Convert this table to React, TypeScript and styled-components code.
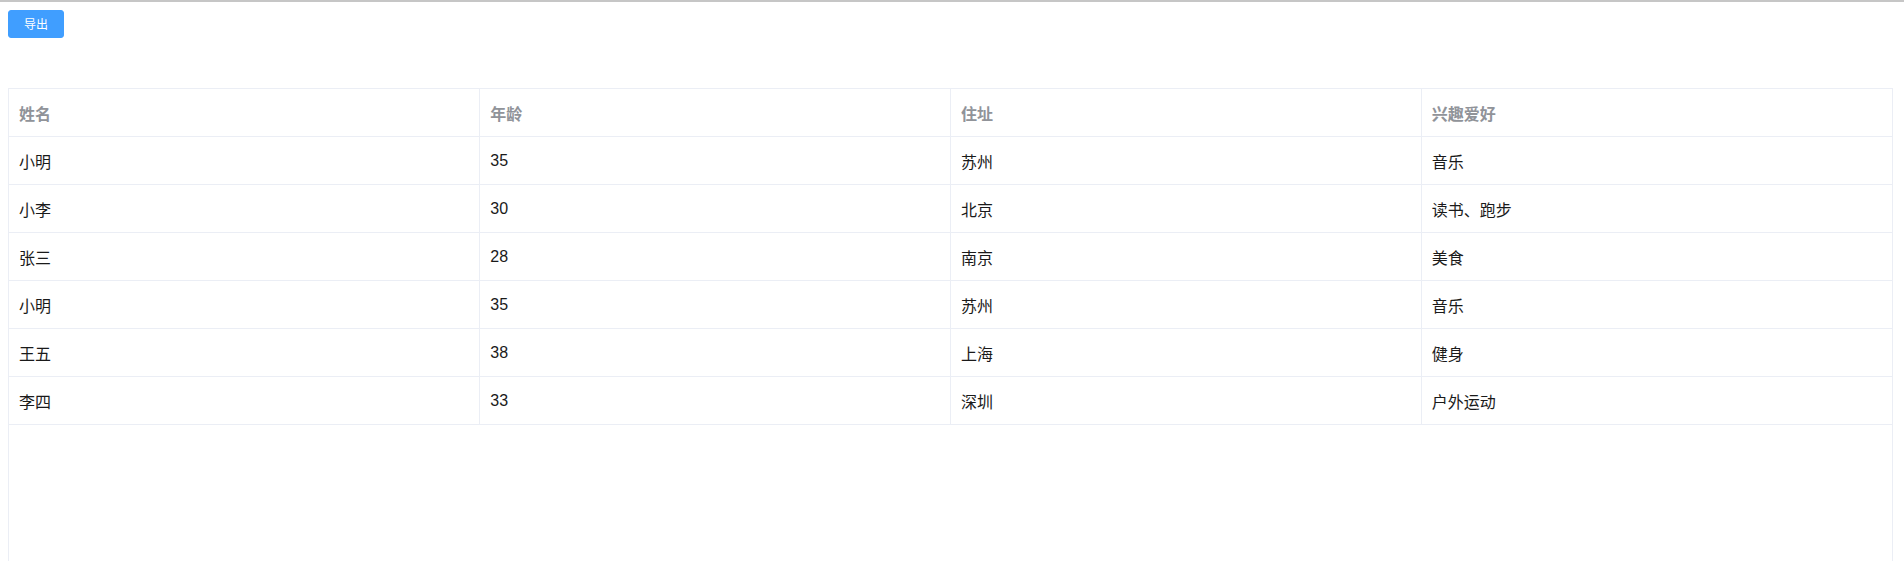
import * as React from "react";
import styled, { createGlobalStyle } from "styled-components";

const GlobalStyle = createGlobalStyle`
  html, body {
    margin: 0;
    padding: 0;
    background: #fff;
    font-family: "Liberation Sans", "Noto Sans CJK SC", sans-serif;
    overflow: hidden;
  }
`;

const COLUMNS = ["姓名", "年龄", "住址", "兴趣爱好"];

const ROWS = [
  { name: "小明", age: 35, address: "苏州", hobby: "音乐" },
  { name: "小李", age: 30, address: "北京", hobby: "读书、跑步" },
  { name: "张三", age: 28, address: "南京", hobby: "美食" },
  { name: "小明", age: 35, address: "苏州", hobby: "音乐" },
  { name: "王五", age: 38, address: "上海", hobby: "健身" },
  { name: "李四", age: 33, address: "深圳", hobby: "户外运动" },
];

const App = () => {
  return (
    <>
      <GlobalStyle />
      <Page>
        <Toolbar>
          <ExportBtn>导出</ExportBtn>
        </Toolbar>
        <TableWrap>
          <Table>
            <colgroup>
              {COLUMNS.map((c) => (
                <col key={c} style={{ width: `${100 / COLUMNS.length}%` }} />
              ))}
            </colgroup>
            <thead>
              <tr>
                {COLUMNS.map((c) => (
                  <HeadCell key={c}>{c}</HeadCell>
                ))}
              </tr>
            </thead>
            <tbody>
              {ROWS.map((r, i) => (
                <tr key={i}>
                  <Cell>{r.name}</Cell>
                  <Cell>{r.age}</Cell>
                  <Cell>{r.address}</Cell>
                  <Cell>{r.hobby}</Cell>
                </tr>
              ))}
            </tbody>
          </Table>
        </TableWrap>
      </Page>
    </>
  );
};
export default App;

const Page = styled.div`
  border-top: 2px solid #c6c6c6;
  padding: 8px 11px 0 8px;
  height: 561px;
  box-sizing: border-box;
  display: flex;
  flex-direction: column;
`;

const Toolbar = styled.div`
  display: flex;
  align-items: center;
  margin-bottom: 50px;
`;

const ExportBtn = styled.button`
  appearance: none;
  border: 1px solid #409eff;
  background: #409eff;
  color: #fff;
  font-family: "Noto Sans CJK SC", sans-serif;
  font-size: 12px;
  line-height: 12px;
  height: 28px;
  width: 56px;
  padding: 0;
  border-radius: 3px;
  cursor: pointer;
`;

const TableWrap = styled.div`
  flex: 1;
  border: 1px solid #ebeef5;
  border-bottom: none;
  overflow: hidden;
`;

const Table = styled.table`
  width: 100%;
  table-layout: fixed;
  border-collapse: collapse;
`;

const HeadCell = styled.th`
  height: 47px;
  padding: 0 10px;
  text-align: left;
  font-size: 16px;
  font-weight: 700;
  color: #909399;
  border-right: 1px solid #ebeef5;
  border-bottom: 1px solid #ebeef5;
  &:last-child {
    border-right: none;
  }
`;

const Cell = styled.td`
  height: 47px;
  padding: 0 10px;
  font-size: 16px;
  color: #1a1a1a;
  border-right: 1px solid #ebeef5;
  border-bottom: 1px solid #ebeef5;
  &:last-child {
    border-right: none;
  }
`;
